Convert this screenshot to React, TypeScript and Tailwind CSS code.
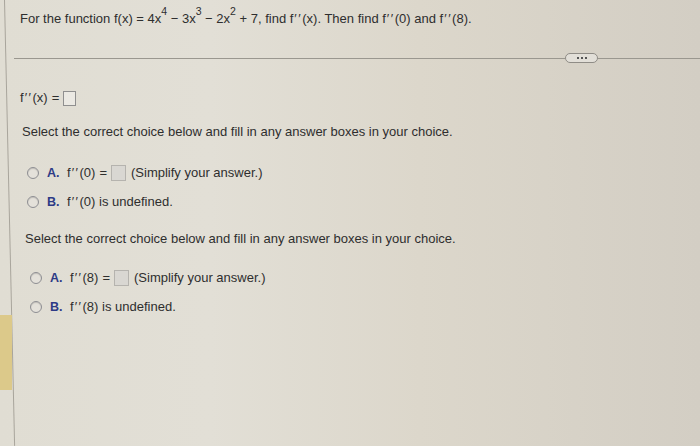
import React from "react";

function Box({ w = 14, h = 16, light = false }: { w?: number; h?: number; light?: boolean }) {
  return (
    <span
      className={
        light
          ? "inline-block border border-[#b5b3ae] bg-[#d9d7d2] align-middle"
          : "inline-block border border-[#8f8f8f] bg-[#ebe9e3] align-middle"
      }
      style={{ width: w, height: h }}
    />
  );
}

function Radio() {
  return (
    <span className="inline-block w-[12px] h-[12px] rounded-full border-[1.5px] border-[#8e8e92] bg-[#e4e1da] shadow-[inset_0_1px_1px_rgba(0,0,0,0.15)]" />
  );
}

function Fpp({ arg }: { arg: string }) {
  return (
    <span>
      f<span className="tracking-[1.5px] ml-[1px]">′′</span>({arg})
    </span>
  );
}

function Option({
  letter,
  children,
}: {
  letter: string;
  children: React.ReactNode;
}) {
  return (
    <div className="flex items-center h-[20px]">
      <Radio />
      <span className="ml-[8px] w-[20px] font-bold text-[#2d3a86] text-[12.5px]">{letter}.</span>
      <span className="flex items-center gap-[4px]">{children}</span>
    </div>
  );
}

export default function App() {
  return (
    <div
      className="w-[700px] h-[446px] overflow-hidden relative text-[#2e2e2e] bg-[linear-gradient(90deg,#e0ddd3_0%,#e2dfd6_30%,#dcd7cb_60%,#d3cec4_100%)]"
      style={{ fontFamily: '"Liberation Sans", Arial, sans-serif' }}
    >
      {/* left frame line */}
      <div className="absolute left-[4px] top-0 w-[1px] h-[446px] bg-[#a8a59c] origin-top rotate-[-1.3deg]" />
      {/* yellow strip */}
      <div className="absolute left-0 top-[315px] w-[12px] h-[75px] bg-[#dcc98a]" />

      <div className="pl-[20px] pt-[9px] text-[13px]">
        <div className="h-[20px] flex items-center">
          <span>
            For the function f(x) = 4x<sup className="text-[10.5px] -top-[0.75em]">4</sup> − 3x
            <sup className="text-[10.5px] -top-[0.75em]">3</sup> − 2x
            <sup className="text-[10.5px] -top-[0.75em]">2</sup> + 7, find <Fpp arg="x" />. Then find <Fpp arg="0" /> and{" "}
            <Fpp arg="8" />.
          </span>
        </div>
      </div>

      {/* separator with pill */}
      <div className="mt-[24px] ml-[14px] flex items-center h-[10px]">
        <div className="w-[551px] h-[1px] bg-[#9a978f]" />
        <div className="w-[33px] h-[10px] rounded-full border border-[#8f8c86] bg-[#e2dfd8] flex items-center justify-center gap-[2px]">
          <span className="w-[2px] h-[2px] bg-[#555]" />
          <span className="w-[2px] h-[2px] bg-[#555]" />
          <span className="w-[2px] h-[2px] bg-[#555]" />
        </div>
        <div className="flex-1 h-[1px] bg-[#9a978f]" />
      </div>

      <div className="text-[13px]">
        <div className="mt-[26px] ml-[20px] flex items-center gap-[4px] h-[18px]">
          <Fpp arg="x" />
          <span>=</span>
          <Box w={13} h={15} />
        </div>

        <div className="mt-[16px] ml-[22px] h-[18px] flex items-center">
          Select the correct choice below and fill in any answer boxes in your choice.
        </div>

        <div className="mt-[22px] ml-[27px]">
          <Option letter="A">
            <Fpp arg="0" />
            <span>=</span>
            <Box w={15} h={16} light />
            <span className="ml-[1px]">(Simplify your answer.)</span>
          </Option>
          <div className="mt-[9px]">
            <Option letter="B">
              <span>
                <Fpp arg="0" /> is undefined.
              </span>
            </Option>
          </div>
        </div>

        <div className="mt-[18px] ml-[25px] h-[18px] flex items-center">
          Select the correct choice below and fill in any answer boxes in your choice.
        </div>

        <div className="mt-[20px] ml-[30px]">
          <Option letter="A">
            <Fpp arg="8" />
            <span>=</span>
            <Box w={15} h={16} light />
            <span className="ml-[1px]">(Simplify your answer.)</span>
          </Option>
          <div className="mt-[9px]">
            <Option letter="B">
              <span>
                <Fpp arg="8" /> is undefined.
              </span>
            </Option>
          </div>
        </div>
      </div>
    </div>
  );
}
